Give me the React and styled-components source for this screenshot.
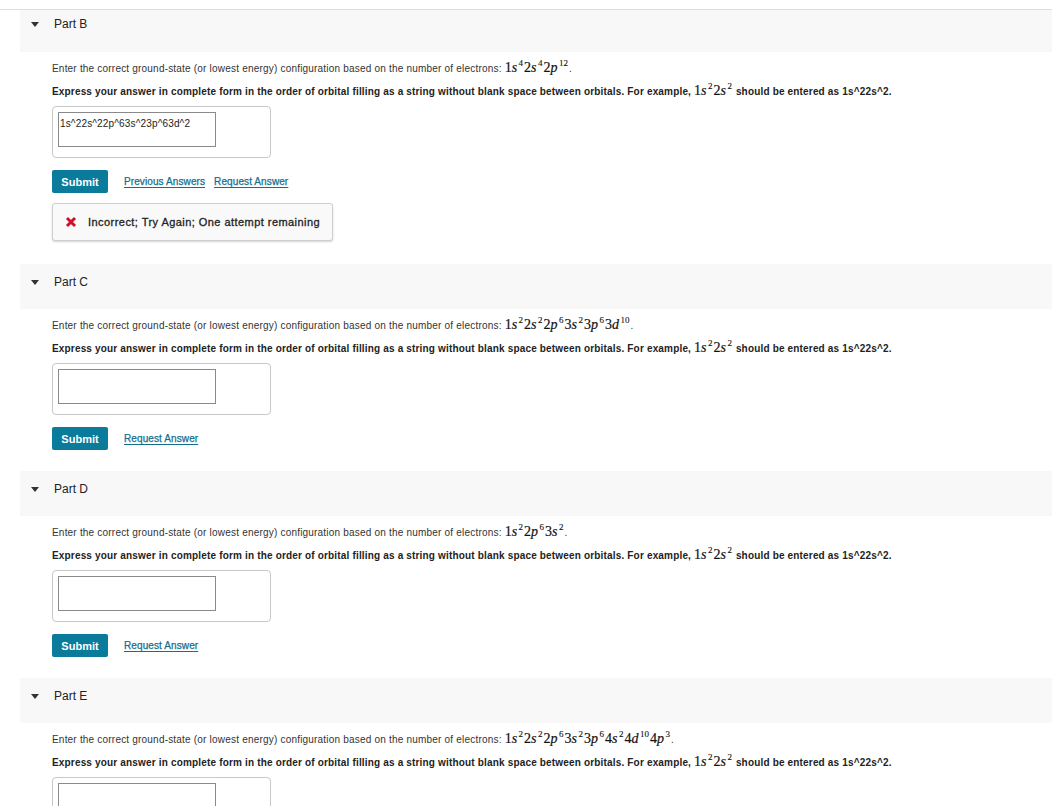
import React from 'react'
import styled, { createGlobalStyle } from 'styled-components'

const GlobalStyle = createGlobalStyle`
  html, body {
    margin: 0;
    padding: 0;
    background: #fff;
    overflow: hidden;
  }
  body {
    font-family: "Liberation Sans", Arial, sans-serif;
    color: #333;
  }
`

const Page = styled.div`
  padding-top: 9px;
  width: 1052px;
  height: 806px;
  box-sizing: border-box;
  overflow: hidden;
`

const TopRule = styled.div`
  border-top: 1px solid #dedede;
`

const PartList = styled.div`
  padding-left: 20px;
`

const PartHeader = styled.div`
  display: flex;
  align-items: flex-start;
  gap: 15px;
  box-sizing: border-box;
  height: ${p => (p.$clipped ? '42px' : '45px')};
  padding: ${p => (p.$clipped ? '7px' : '11px')} 0 0 11px;
  background: #f8f8f8;
`

const Caret = styled.span`
  width: 0;
  height: 0;
  margin-top: 5px;
  border-left: 4px solid transparent;
  border-right: 4px solid transparent;
  border-top: 5px solid #333;
`

const PartTitle = styled.span`
  font-size: 12px;
  line-height: 14px;
  color: #222;
`

const PartBody = styled.div`
  padding: 8px 0 21px 32px;
`

const Line = styled.div`
  font-size: 10px;
  line-height: 16px;
  height: 16px;
  white-space: nowrap;
  color: ${p => (p.$bold ? '#222' : '#333')};
  font-weight: ${p => (p.$bold ? 'bold' : 'normal')};
  letter-spacing: ${p => (p.$bold ? '0.17px' : '0.2px')};
  & + & {
    margin-top: 7px;
  }
`

const MathExpr = styled.span`
  font-family: "Liberation Serif", "DejaVu Serif", serif;
  font-size: 14px;
  font-weight: normal;
  color: #111;
  letter-spacing: 0;
  -webkit-text-stroke: 0.2px #111;
`

const Var = styled.i`
  font-style: italic;
`

const Sup = styled.sup`
  font-size: 9px;
  vertical-align: 0;
  position: relative;
  top: -6px;
  margin: 0 1px 0 1.5px;
  line-height: 0;
  -webkit-text-stroke: 0.1px #111;
`

const AnswerBox = styled.div`
  width: 219px;
  height: 52px;
  box-sizing: border-box;
  margin-top: 7px;
  padding: 5px;
  border: 1px solid #c8c8c8;
  border-radius: 4px;
`

const AnswerField = styled.textarea`
  display: block;
  width: 158px;
  height: 35px;
  box-sizing: border-box;
  margin: 0;
  padding: 4px 1px;
  border: 1px solid #8a8a8a;
  border-radius: 0;
  resize: none;
  overflow: hidden;
  font-family: "Liberation Sans", Arial, sans-serif;
  font-size: 10px;
  line-height: 14px;
  letter-spacing: 0.15px;
  color: #222;
  background: #fff;
  outline: none;
`

const Actions = styled.div`
  display: flex;
  align-items: center;
  gap: 16px;
  margin-top: 12px;
  height: 23px;
`

const SubmitButton = styled.button`
  width: 56px;
  height: 23px;
  padding: 0;
  border: none;
  border-radius: 2px;
  background: #0a7b9b;
  color: #fff;
  font-family: "Liberation Sans", Arial, sans-serif;
  font-size: 11px;
  font-weight: bold;
  cursor: pointer;
`

const LinkRow = styled.div`
  display: flex;
  gap: 9px;
`

const TextLink = styled.a`
  font-size: 10px;
  letter-spacing: 0.1px;
  color: #136f8d;
  text-decoration: underline;
  text-underline-offset: 2px;
  cursor: pointer;
  -webkit-text-stroke: 0.25px #136f8d;
`

const Feedback = styled.div`
  display: flex;
  align-items: center;
  gap: 11px;
  width: 281px;
  height: 38px;
  box-sizing: border-box;
  margin-top: 10px;
  margin-bottom: 2px;
  padding-left: 12px;
  background: #f9f9f9;
  border: 1px solid #cfcfcf;
  border-radius: 3px;
  box-shadow: 0 1px 2px rgba(0, 0, 0, 0.18);
`

const FeedbackText = styled.span`
  font-size: 11px;
  letter-spacing: 0.45px;
  color: #222;
  -webkit-text-stroke: 0.3px #222;
`

const CrossIcon = () => (
  <svg width="12" height="12" viewBox="0 0 12 12">
    <path d="M2 2 L10 10 M10 2 L2 10" stroke="#d0102a" strokeWidth="3" strokeLinecap="butt" />
  </svg>
)

// [number, orbital, exponent]
const Config = ({ terms }) => (
  <MathExpr>
    {terms.map(([n, l, e], i) => (
      <React.Fragment key={i}>
        {n}<Var>{l}</Var><Sup>{e}</Sup>
      </React.Fragment>
    ))}
  </MathExpr>
)

const EXAMPLE = [[1, 's', 2], [2, 's', 2]]

const parts = [
  {
    name: 'Part B',
    terms: [[1, 's', 4], [2, 's', 4], [2, 'p', 12]],
    answer: '1s^22s^22p^63s^23p^63d^2',
    previous: true,
    feedback: 'Incorrect; Try Again; One attempt remaining',
  },
  {
    name: 'Part C',
    terms: [[1, 's', 2], [2, 's', 2], [2, 'p', 6], [3, 's', 2], [3, 'p', 6], [3, 'd', 10]],
    answer: '',
  },
  {
    name: 'Part D',
    terms: [[1, 's', 2], [2, 'p', 6], [3, 's', 2]],
    answer: '',
  },
  {
    name: 'Part E',
    terms: [[1, 's', 2], [2, 's', 2], [2, 'p', 6], [3, 's', 2], [3, 'p', 6], [4, 's', 2], [4, 'd', 10], [4, 'p', 3]],
    answer: '',
    offscreen: true,
  },
]

const Part = ({ part, first }) => (
  <section>
    <PartHeader $clipped={first}>
      <Caret />
      <PartTitle>{part.name}</PartTitle>
    </PartHeader>
    <PartBody>
      <Line>
        Enter the correct ground-state (or lowest energy) configuration based on the number of electrons:{' '}
        <Config terms={part.terms} />.
      </Line>
      <Line $bold>
        Express your answer in complete form in the order of orbital filling as a string without blank space between orbitals. For example,{' '}
        <Config terms={EXAMPLE} /> should be entered as 1s^22s^2.
      </Line>
      <AnswerBox>
        <AnswerField defaultValue={part.answer} readOnly spellCheck={false} />
      </AnswerBox>
      {!part.offscreen && (
        <Actions>
          <SubmitButton>Submit</SubmitButton>
          <LinkRow>
            {part.previous && <TextLink>Previous Answers</TextLink>}
            <TextLink>Request Answer</TextLink>
          </LinkRow>
        </Actions>
      )}
      {part.feedback && (
        <Feedback>
          <CrossIcon />
          <FeedbackText>{part.feedback}</FeedbackText>
        </Feedback>
      )}
    </PartBody>
  </section>
)

const App = () => (
  <>
    <GlobalStyle />
    <Page>
      <TopRule />
      <PartList>
        {parts.map((p, i) => (
          <Part key={p.name} part={p} first={i === 0} />
        ))}
      </PartList>
    </Page>
  </>
)

export default App
